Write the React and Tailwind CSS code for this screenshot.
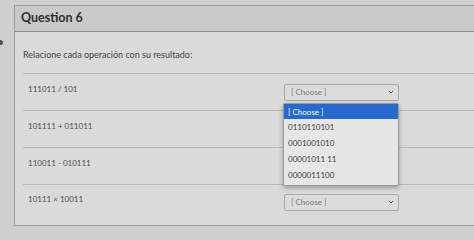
import { ChevronDown } from "lucide-react";

const rows = [
  { expr: "111011 / 101", open: true },
  { expr: "101111 + 011011" },
  { expr: "110011 - 010111" },
  { expr: "10111 × 10011" },
];

const options = ["0110110101", "0001001010", "00001011 11", "0000011100"];

function Select() {
  return (
    <div className="flex items-center justify-between w-[115px] h-[17px] border border-[#a9a9a9] rounded-[2px] bg-[#dcdcdc] pl-[6px] pr-[3px]">
      <span className="text-[8px] text-[#7a7a7a]">[ Choose ]</span>
      <ChevronDown size={8} strokeWidth={3} className="text-[#555]" />
    </div>
  );
}

export default function App() {
  return (
    <div
      className="relative w-[474px] h-[240px] overflow-hidden bg-[#cfcfcf] pt-[5px] pl-[14px] text-[#3c3c3c]"
      style={{ fontFamily: "Lato, 'Open Sans', sans-serif" }}
    >
      <div className="absolute left-0 top-[40px] w-[3px] h-[5px] bg-[#555] rounded-r" />
      <div className="border-l border-t border-b border-[#9c9c9c] bg-[#dadada]">
        <div className="h-[26px] flex items-center pl-[6px] bg-[#c9c9c9] border-b border-[#8e8e8e]">
          <span className="text-[12.5px] font-bold text-[#2e2e2e]">Question 6</span>
        </div>
        <div className="pl-[8px]">
          <div className="h-[41px] pt-[16px] text-[9px] text-[#444]">
            Relacione cada operación con su resultado:
          </div>
          {rows.map((r, i) => (
            <div
              key={i}
              className={
                "relative border-t border-[#b9b9b9] grid grid-cols-[261px_1fr] items-center " +
                (i === 3 ? "h-[41px] pb-[6px]" : "h-[37px]")
              }
            >
              <span className="pl-[5px] text-[8px] text-[#4a4a4a] -mt-[6px]">{r.expr}</span>
              {i === 0 || i === 3 ? <Select /> : <div />}
              {r.open && (
                <div className="absolute left-[260px] top-[29px] w-[116px] bg-[#e6e6e6] border border-[#9a9a9a] rounded-[2px] shadow-[0_2px_5px_rgba(0,0,0,0.3)] z-10 pb-[2px]">
                  <div className="h-[15px] bg-[#2668cc] text-white text-[8px] flex items-center pl-[4px]">
                    [ Choose ]
                  </div>
                  {options.map((o) => (
                    <div key={o} className="h-[16px] flex items-center pl-[4px] text-[8px] text-[#3a3a3a]">
                      {o}
                    </div>
                  ))}
                </div>
              )}
            </div>
          ))}
        </div>
      </div>
    </div>
  );
}
